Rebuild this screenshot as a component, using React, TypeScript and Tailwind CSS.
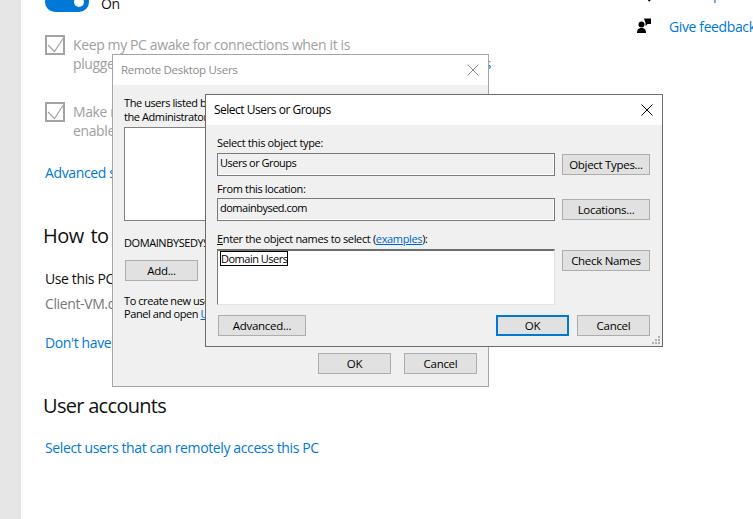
import React from "react";

const sui = "font-['Open_Sans','Noto_Sans',sans-serif]";

function Check() {
  return (
    <svg width="20" height="20" viewBox="0 0 20 20" className="shrink-0">
      <rect x="1" y="1" width="18" height="18" fill="none" stroke="#a3a3a3" strokeWidth="2" />
      <path d="M3 10 L9.5 16.5 L18 3.5" fill="none" stroke="#a3a3a3" strokeWidth="1.2" />
    </svg>
  );
}

function Btn({ children, className = "", primary = false }: { children: React.ReactNode; className?: string; primary?: boolean }) {
  return (
    <div
      className={
        "flex h-[21px] items-center justify-center bg-[#e1e1e1] text-[11.5px] tracking-[-0.3px] text-[#000] " +
        (primary ? "border-2 border-[#0078d7] " : "border border-[#adadad] ") +
        className
      }
    >
      {children}
    </div>
  );
}

function Field({ text }: { text: string }) {
  return (
    <div className="h-[23px] w-[338px] border border-[#7a7a7a] bg-[#f0f0f0]">
      <div className="h-full border-r border-b border-white pl-[2px] text-[11px] leading-[18px] tracking-[-0.5px] text-[#000]">{text}</div>
    </div>
  );
}

function Close({ color }: { color: string }) {
  return (
    <svg width="12" height="12" viewBox="0 0 12 12">
      <path d="M0.5 0.5 L11.5 11.5 M11.5 0.5 L0.5 11.5" stroke={color} strokeWidth="1" fill="none" />
    </svg>
  );
}

export default function App() {
  return (
    <div className={"relative flex h-[519px] w-[753px] overflow-hidden bg-white " + sui}>
      <div className="w-[21px] shrink-0 bg-[#e6e6e6]" />

      <main className="w-[600px] shrink-0 pl-[24px] text-[14px] tracking-[-0.38px]">
        <div className="mt-[-8px] flex h-[20px] items-center gap-[12px]">
          <div className="flex h-[20px] w-[44px] items-center justify-end rounded-full bg-[#0078d7] pr-[5px]">
            <div className="h-[10px] w-[10px] rounded-full bg-white" />
          </div>
          <span className="relative top-[1px] text-[#111]">On</span>
        </div>

        <div className="mt-[23px] flex w-[330px] gap-[8px] text-[#a0a0a0]">
          <Check />
          <p className="w-[310px] leading-[19px]">Keep my PC awake for connections when it is plugged in</p>
        </div>
        <div className="ml-[398px] mt-[-19px] h-[19px] whitespace-nowrap leading-[19px] text-[#0078d7]">settings</div>

        <div className="mt-[29px] flex w-[330px] gap-[8px] text-[#a0a0a0]">
          <Check />
          <p className="w-[310px] leading-[19px]">
            Make my PC discoverable on private networks to
            <br />
            enable automatic connection
          </p>
        </div>

        <div className="mt-[23px] leading-[20px] text-[#0078d7]">Advanced settings</div>
        <h2 className="ml-[-2px] mt-[39px] text-[20px] leading-[28px] tracking-[-0.5px] text-[#111] [word-spacing:2px]">How to connect to this PC</h2>
        <div className="mt-[19px] leading-[20px] text-[#111]">Use this PC name to connect</div>
        <div className="mt-[5px] leading-[20px] text-[#777]">Client-VM.domainbysed.com</div>
        <div className="mt-[19px] leading-[20px] text-[#0078d7]">Don't have a Remote Desktop client</div>
        <h2 className="ml-[-2px] mt-[39px] text-[20px] leading-[28px] tracking-[-0.7px] text-[#111]">User accounts</h2>
        <div className="mt-[18px] leading-[20px] text-[#0078d7]">Select users that can remotely access this PC</div>
      </main>

      <aside className="flex flex-col gap-[13px] pl-[17px] text-[14px] tracking-[-0.38px] text-[#0078d7]">
        <div className="mt-[-17px] flex h-[20px] items-center gap-[17px] whitespace-nowrap">
          <svg width="14" height="20" viewBox="0 0 14 20" className="shrink-0 translate-x-[-1px]"><circle cx="6" cy="10" r="5.5" fill="none" stroke="#000" strokeWidth="1.6" /><path d="M9 14 L13 18" stroke="#000" strokeWidth="1.8" /></svg>
          Get help
        </div>
        <div className="flex h-[20px] items-center gap-[17px] whitespace-nowrap">
          <svg width="14" height="16" viewBox="0 0 14 16" className="shrink-0 translate-x-[-1px]">
            <circle cx="4.5" cy="6.5" r="3" fill="#000" />
            <path d="M0 15 C0 11 2 10 4.5 10 C7 10 9 11 9 15 Z" fill="#000" />
            <path d="M7 0.5 H14 V6 H10.5 L8.5 8 V5 Z" fill="#000" />
          </svg>
          Give feedback
        </div>
      </aside>

      {/* Remote Desktop Users window */}
      <section className="absolute left-[112px] top-[54px] h-[333px] w-[377px] border border-[#a6a6a6] bg-[#f0f0f0] text-[11px] tracking-[-0.42px] text-[#000]">
        <header className="flex h-[30px] items-center justify-between bg-white pl-[8px] pr-[9px] text-[#8c8c8c]">
          <span className="text-[11.5px] tracking-[-0.3px]">Remote Desktop Users</span>
          <Close color="#8c8c8c" />
        </header>
        <div className="px-[11px]">
          <p className="mt-[11px] whitespace-nowrap leading-[14px]">
            The users listed below can connect to this computer, and any members of
            <br />
            the Administrators group can connect even if they are not listed.
          </p>
          <div className="mt-[3px] h-[94px] w-[352px] border border-[#828282] bg-white" />
          <p className="mt-[14px] leading-[16px]">DOMAINBYSEDYSERVER\Admin</p>
          <div className="mt-[9px] flex">
            <Btn className="ml-[1px] w-[73px]">Add...</Btn>
          </div>
          <p className="mt-[13px] whitespace-nowrap leading-[13px]">
            To create new users accounts or add to other groups, go to Control
            <br />
            Panel and open <span className="text-[#0066cc] underline">User Accounts</span>.
          </p>
        </div>
        <div className="absolute bottom-[12px] right-[11px] flex gap-[13px]">
          <Btn className="w-[73px]">OK</Btn>
          <Btn className="w-[73px]">Cancel</Btn>
        </div>
      </section>

      {/* Select Users or Groups window */}
      <section className="absolute left-[205px] top-[94px] h-[253px] w-[458px] border border-[#6b6b6b] bg-[#f0f0f0] text-[11px] tracking-[-0.35px] text-[#000]">
        <header className="flex h-[30px] items-center justify-between bg-white pl-[8px] pr-[9px]">
          <span className="text-[12px] tracking-[-0.5px]">Select Users or Groups</span>
          <Close color="#000" />
        </header>
        <div className="pl-[11px] pr-[12px]">
          <p className="mt-[9px] h-[19px] leading-[17px]">Select this object type:</p>
          <div className="flex items-center justify-between">
            <Field text="Users or Groups" />
            <Btn className="w-[88px]">Object Types...</Btn>
          </div>
          <p className="mt-[5px] h-[17px] leading-[15px]">From this location:</p>
          <div className="flex items-center justify-between">
            <Field text="domainbysed.com" />
            <Btn className="w-[88px]">Locations...</Btn>
          </div>
          <p className="mt-[10px] h-[18px] leading-[16px]">
            <span className="underline">E</span>nter the object names to select (<span className="text-[#0066cc] underline">examples</span>):
          </p>
          <div className="flex items-start justify-between">
            <div className="h-[56px] w-[338px] border-t-2 border-l border-r border-b border-t-[#6e6e6e] border-l-[#7a7a7a] border-r-[#e3e3e3] border-b-[#e3e3e3] bg-white pl-[1px] pt-0">
              <span className="ml-[1px] inline-block border border-black text-[11px] leading-[13px] tracking-[-0.5px]">Domain Users</span>
            </div>
            <Btn className="mt-[1px] w-[88px]">Check Names</Btn>
          </div>
          <div className="mt-[10px] flex justify-between pl-[1px]">
            <Btn className="w-[88px]">Advanced...</Btn>
            <div className="flex gap-[8px]">
              <Btn primary className="w-[73px]">OK</Btn>
              <Btn className="w-[73px]">Cancel</Btn>
            </div>
          </div>
        </div>
        <svg width="10" height="10" viewBox="0 0 10 10" className="absolute bottom-[1px] right-[1px]">
          <g fill="#b0b0b0">
            <rect x="7" y="1" width="2" height="2" />
            <rect x="4" y="4" width="2" height="2" />
            <rect x="7" y="4" width="2" height="2" />
            <rect x="1" y="7" width="2" height="2" />
            <rect x="4" y="7" width="2" height="2" />
            <rect x="7" y="7" width="2" height="2" />
          </g>
        </svg>
      </section>
    </div>
  );
}
